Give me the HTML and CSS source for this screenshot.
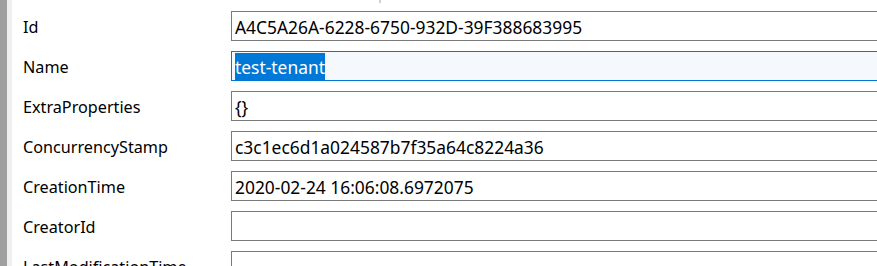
FILE: index.html
```html
<!DOCTYPE html>
<html lang="en">
<head>
    <meta charset="UTF-8">
    <meta name="viewport" content="width=device-width, initial-scale=1.0">
    <title>Tenant</title>
    <link rel="stylesheet" href="styles.css">
</head>
<body>
    <div class="window">
        <div class="sidebar"></div>
        <div class="gutter"></div>
        <div class="content">
            <div class="topbar"><span class="grip"></span></div>
            <div class="form">
                <div class="label">Id</div>
                <div class="field">A4C5A26A-6228-6750-932D-39F388683995</div>

                <div class="label">Name</div>
                <div class="field focused"><span class="selected">test-tenant</span></div>

                <div class="label">ExtraProperties</div>
                <div class="field">{}</div>

                <div class="label">ConcurrencyStamp</div>
                <div class="field">c3c1ec6d1a024587b7f35a64c8224a36</div>

                <div class="label">CreationTime</div>
                <div class="field">2020-02-24 16:06:08.6972075</div>

                <div class="label">CreatorId</div>
                <div class="field"></div>

                <div class="label">LastModificationTime</div>
                <div class="field"></div>
            </div>
        </div>
    </div>
</body>
</html>
```

FILE: styles.css
```css
html, body {
    margin: 0;
    height: 100%;
    overflow: hidden;
    background-color: #fff;
}

body {
    font-family: "Segoe UI", "Noto Sans", "Open Sans", sans-serif;
    color: #000;
}

.window {
    display: flex;
    height: 266px;
    overflow: hidden;
}

.sidebar {
    width: 7px;
    background-color: #a0a0a0;
}

.gutter {
    width: 5px;
    background-color: #f0f0f0;
}

.content {
    flex: 1;
    display: flex;
    flex-direction: column;
}

.topbar {
    height: 3px;
    background-color: #f0f0f0;
    position: relative;
}

.grip {
    position: absolute;
    left: 367px;
    top: 0;
    width: 2px;
    height: 3px;
    background-color: #d0d0d0;
}

.form {
    display: grid;
    grid-template-columns: 208px 1fr;
    row-gap: 10px;
    padding: 11px 0 0 11px;
}

.label {
    height: 30px;
    font-size: 16.2px;
    line-height: 32px;
}

.field {
    height: 28px;
    font-size: 17.4px;
    line-height: 31px;
    padding-left: 3px;
    border: 1px solid #7a7a7a;
    border-right: none;
    white-space: nowrap;
}

.field.focused {
    border-color: #0078d7;
    background-color: #f5f9fe;
}

.selected {
    background-color: #0078d7;
    color: #fff;
    padding: 2px 0 2px;
}
```
